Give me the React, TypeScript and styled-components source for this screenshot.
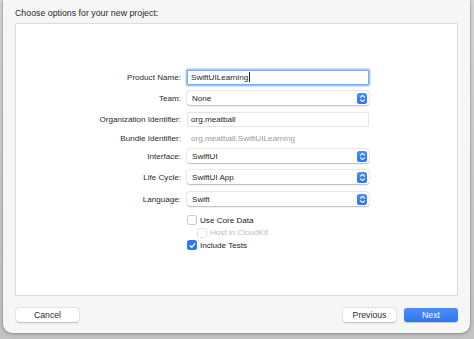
import React from "react";
import styled, { createGlobalStyle } from "styled-components";

const GlobalStyle = createGlobalStyle`
  html, body {
    margin: 0;
    padding: 0;
    background: #c9c9c9;
  }
  body {
    font-family: "Liberation Sans", Arial, sans-serif;
    color: #262626;
  }
`;

interface Field {
  label: string;
  kind: "text" | "popup" | "static";
  value: string;
  row: number; // row height, px
  focused?: boolean;
}

const fields: Field[] = [
  { label: "Product Name:", kind: "text", value: "SwiftUILearning", row: 21, focused: true },
  { label: "Team:", kind: "popup", value: "None", row: 21 },
  { label: "Organization Identifier:", kind: "text", value: "org.meatball", row: 21 },
  { label: "Bundle Identifier:", kind: "static", value: "org.meatball.SwiftUILearning", row: 17 },
  { label: "Interface:", kind: "popup", value: "SwiftUI", row: 19 },
  { label: "Life Cycle:", kind: "popup", value: "SwiftUI App", row: 23 },
  { label: "Language:", kind: "popup", value: "Swift", row: 21 },
];

const options = [
  { label: "Use Core Data", checked: false, disabled: false, indent: false },
  { label: "Host in CloudKit", checked: false, disabled: true, indent: true },
  { label: "Include Tests", checked: true, disabled: false, indent: false },
];

const rowTemplate = fields.map((f) => `${f.row}px`).join(" ") + " auto";

const App: React.FC = () => (
  <>
    <GlobalStyle />
    <Screen>
      <Window>
        <Heading>Choose options for your new project:</Heading>
        <Panel>
          <Form $rows={rowTemplate}>
            {fields.map((f) => (
              <React.Fragment key={f.label}>
                <Label>{f.label}</Label>
                {f.kind === "text" && (
                  <TextField $focused={f.focused}>
                    {f.value}
                    {f.focused && <Caret />}
                  </TextField>
                )}
                {f.kind === "static" && <StaticValue>{f.value}</StaticValue>}
                {f.kind === "popup" && (
                  <Popup>
                    <span>{f.value}</span>
                    <Stepper>
                      <svg width="7" height="9" viewBox="0 0 7 9">
                        <path
                          d="M1.5 3.2 L3.5 1.4 L5.5 3.2 M1.5 5.8 L3.5 7.6 L5.5 5.8"
                          fill="none"
                          stroke="#fff"
                          strokeWidth="1.1"
                          strokeLinecap="round"
                          strokeLinejoin="round"
                        />
                      </svg>
                    </Stepper>
                  </Popup>
                )}
              </React.Fragment>
            ))}
            <Checks>
              {options.map((o) => (
                <CheckRow key={o.label} $indent={o.indent} $disabled={o.disabled}>
                  <Box $checked={o.checked} $disabled={o.disabled}>
                    {o.checked && (
                      <svg width="7" height="7" viewBox="0 0 7 7">
                        <path
                          d="M1.2 3.7 L2.8 5.3 L5.8 1.6"
                          fill="none"
                          stroke="#fff"
                          strokeWidth="1.3"
                          strokeLinecap="round"
                          strokeLinejoin="round"
                        />
                      </svg>
                    )}
                  </Box>
                  {o.label}
                </CheckRow>
              ))}
            </Checks>
          </Form>
        </Panel>
        <Footer>
          <Button $width={63}>Cancel</Button>
          <FooterRight>
            <Button $width={53}>Previous</Button>
            <Button $width={54} $primary>
              Next
            </Button>
          </FooterRight>
        </Footer>
      </Window>
    </Screen>
  </>
);

const Screen = styled.div`
  width: 474px;
  height: 339px;
  padding: 0 4px 0 3px;
  box-sizing: border-box;
  background: linear-gradient(#d6d6d6, #c4c4c4);
  overflow: hidden;
`;

const Window = styled.div`
  height: 333px;
  background: #f6f6f6;
  border-radius: 0 0 9px 9px;
  box-shadow: 0 1px 4px rgba(0, 0, 0, 0.25), 0 0 0 0.5px rgba(0, 0, 0, 0.15);
  display: flex;
  flex-direction: column;
  padding: 0 12px;
  box-sizing: border-box;
`;

const Heading = styled.div`
  height: 23px;
  padding-top: 8px;
  box-sizing: border-box;
  font-size: 8.8px;
  color: #2a2a2a;
`;

const Panel = styled.div`
  height: 273px;
  background: #fff;
  border: 1px solid #dcdcdc;
  box-sizing: border-box;
  padding-top: 42.5px;
`;

const Form = styled.div<{ $rows: string }>`
  display: grid;
  grid-template-columns: 165px 182px;
  grid-template-rows: ${(p) => p.$rows};
  column-gap: 6px;
  align-items: center;
  font-size: 8.1px;
`;

const Label = styled.div`
  text-align: right;
  color: #2b2b2b;
`;

const TextField = styled.div<{ $focused?: boolean }>`
  height: 15px;
  display: flex;
  align-items: center;
  padding-left: 3px;
  background: #fff;
  box-sizing: border-box;
  color: #1e1e1e;
  border: 1px solid ${(p) => (p.$focused ? "#7fa9ea" : "#e6e6e6")};
  box-shadow: ${(p) => (p.$focused ? "0 0 0 1.5px #a9c6f3" : "none")};
  border-radius: 1px;
`;

const Caret = styled.span`
  width: 1px;
  height: 10px;
  background: #222;
  margin-left: 1px;
`;

const StaticValue = styled.div`
  padding-left: 4px;
  color: #9a9a9a;
`;

const Popup = styled.div`
  height: 14px;
  display: flex;
  align-items: center;
  justify-content: space-between;
  padding: 0 2px 0 5px;
  background: #fff;
  border-radius: 3px;
  box-sizing: border-box;
  box-shadow: 0 0.5px 1.5px rgba(0, 0, 0, 0.25), 0 0 0 0.5px rgba(0, 0, 0, 0.08);
  color: #1e1e1e;
`;

const Stepper = styled.div`
  width: 10px;
  height: 11px;
  border-radius: 2.5px;
  background: linear-gradient(#4b8ff7, #2c74ee);
  display: flex;
  align-items: center;
  justify-content: center;
`;

const Checks = styled.div`
  grid-column: 2;
  align-self: start;
  display: flex;
  flex-direction: column;
  gap: 2.5px;
  padding-top: 5.5px;
`;

const CheckRow = styled.div<{ $indent?: boolean; $disabled?: boolean }>`
  display: flex;
  align-items: center;
  gap: 3px;
  height: 10px;
  margin-left: ${(p) => (p.$indent ? "10px" : "0")};
  color: ${(p) => (p.$disabled ? "#bdbdbd" : "#222")};
`;

const Box = styled.div<{ $checked?: boolean; $disabled?: boolean }>`
  width: 10px;
  height: 10px;
  box-sizing: border-box;
  border-radius: 2.5px;
  display: flex;
  align-items: center;
  justify-content: center;
  background: ${(p) => (p.$checked ? "#2f78f0" : "#fff")};
  border: ${(p) => (p.$checked ? "none" : `1px solid ${p.$disabled ? "#e4e4e4" : "#c8c8c8"}`)};
`;

const Footer = styled.div`
  flex: 1;
  display: flex;
  align-items: flex-start;
  justify-content: space-between;
  padding-top: 12px;
  padding-left: 1px;
`;

const FooterRight = styled.div`
  display: flex;
  gap: 8px;
`;

const Button = styled.div<{ $width: number; $primary?: boolean }>`
  width: ${(p) => p.$width}px;
  height: 14px;
  display: flex;
  align-items: center;
  justify-content: center;
  font-size: 8.7px;
  border-radius: 3px;
  background: ${(p) => (p.$primary ? "linear-gradient(#4d8ff8, #2f76f0)" : "#fff")};
  color: ${(p) => (p.$primary ? "#fff" : "#2a2a2a")};
  box-shadow: ${(p) =>
    p.$primary
      ? "0 0.5px 1px rgba(0,0,0,0.2)"
      : "0 0.5px 1.5px rgba(0,0,0,0.22), 0 0 0 0.5px rgba(0,0,0,0.07)"};
`;

export default App;
